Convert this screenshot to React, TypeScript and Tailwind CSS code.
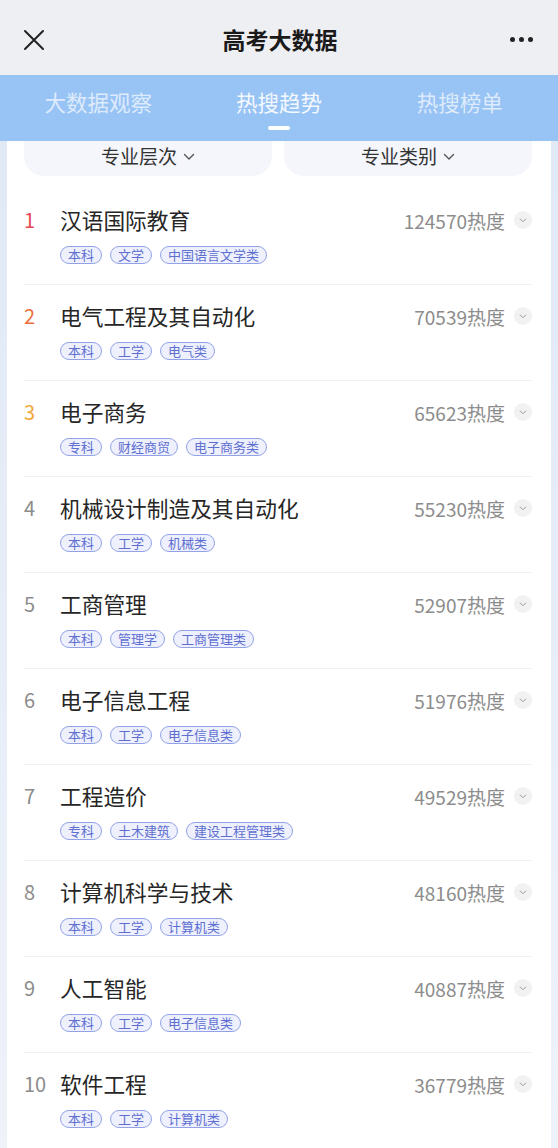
import React from 'react'

type Item = {
  name:  string
  heat:  number
  tags:  string[]
}

const ITEMS: Item[] = [
  { name: '汉语国际教育',         heat: 124570, tags: ['本科', '文学', '中国语言文学类'] },
  { name: '电气工程及其自动化',   heat: 70539,  tags: ['本科', '工学', '电气类'] },
  { name: '电子商务',             heat: 65623,  tags: ['专科', '财经商贸', '电子商务类'] },
  { name: '机械设计制造及其自动化', heat: 55230, tags: ['本科', '工学', '机械类'] },
  { name: '工商管理',             heat: 52907,  tags: ['本科', '管理学', '工商管理类'] },
  { name: '电子信息工程',         heat: 51976,  tags: ['本科', '工学', '电子信息类'] },
  { name: '工程造价',             heat: 49529,  tags: ['专科', '土木建筑', '建设工程管理类'] },
  { name: '计算机科学与技术',     heat: 48160,  tags: ['本科', '工学', '计算机类'] },
  { name: '人工智能',             heat: 40887,  tags: ['本科', '工学', '电子信息类'] },
  { name: '软件工程',             heat: 36779,  tags: ['本科', '工学', '计算机类'] },
]

const TABS = ['大数据观察', '热搜趋势', '热搜榜单']

const rankColor = (i: number) =>
  i === 0 ? 'text-[#e84a55]' : i === 1 ? 'text-[#ea6f3c]' : i === 2 ? 'text-[#f1a83d]' : 'text-[#8c8c8c]'

function Chevron({ className }: { className?: string }) {
  return (
    <svg viewBox="0 0 12 8" className={className} fill="none" stroke="currentColor" strokeWidth="1.4" strokeLinecap="round" strokeLinejoin="round">
      <path d="M1.5 1.5 6 6l4.5-4.5" />
    </svg>
  )
}

export default function App() {
  return (
    <div
      className="w-[558px] h-[1148px] overflow-hidden bg-gradient-to-b from-[#dfe8f7] to-[#eef2f9] flex flex-col"
      style={{ fontFamily: '"Noto Sans CJK SC", "Noto Sans", sans-serif' }}
    >
      {/* Header */}
      <header className="h-[75px] shrink-0 bg-[#eeeff3] flex items-center justify-between px-[22px] pt-[4px]">
        <svg viewBox="0 0 24 24" className="w-[24px] h-[24px] text-[#222]" fill="none" stroke="currentColor" strokeWidth="2" strokeLinecap="round">
          <path d="M3 3l18 18M21 3 3 21" />
        </svg>
        <h1 className="text-[23px] font-bold text-[#1a1a1a] leading-none -mr-[4px]">高考大数据</h1>
        <div className="flex items-center gap-[4px] w-[26px]">
          <span className="w-[5px] h-[5px] rounded-full bg-[#222]" />
          <span className="w-[5px] h-[5px] rounded-full bg-[#222]" />
          <span className="w-[5px] h-[5px] rounded-full bg-[#222]" />
        </div>
      </header>

      {/* Tabs */}
      <nav className="h-[66px] shrink-0 bg-[#98c3f5] flex px-2">
        {TABS.map((t, i) => (
          <div key={t} className="flex-1 flex flex-col items-center pt-[13px]">
            <span className={`text-[21.5px] leading-[28px] ${i === 1 ? 'text-[#f4f8ff]' : 'text-[#deebfc]'}`}>{t}</span>
            {i === 1 && <span className="mt-[10px] w-[22px] h-[4px] rounded-full bg-white" />}
          </div>
        ))}
      </nav>

      {/* Card */}
      <main className="mx-[7px] flex-1 bg-white px-[17px]">
        <div className="grid grid-cols-2 gap-[12px] pr-[2px]">
          {['专业层次', '专业类别'].map(f => (
            <div key={f} className="h-[35px] rounded-b-[20px] bg-[#f4f6fc] flex items-center justify-center pb-[6px] text-[#333]">
              <span className="text-[19px] leading-none">{f}</span>
              <Chevron className="w-[12px] h-[8px] ml-[6px] mt-[2px] text-[#555]" />
            </div>
          ))}
        </div>

        <ul className="mt-[13px] pr-[2px]">
          {ITEMS.map((it, i) => (
            <li key={it.name} className="pt-[17px] pb-[20px] border-b border-[#f0f0f0]">
              <div className="flex items-center h-[28px]">
                <span className={`w-[36px] text-[20px] leading-none ${rankColor(i)}`}>{i + 1}</span>
                <span className="flex-1 text-[21.7px] leading-none text-[#262626]">{it.name}</span>
                <span className="text-[19px] leading-none text-[#8c8c8c]">{it.heat}热度</span>
                <span className="ml-[9px] w-[18px] h-[18px] rounded-full bg-[#f2f2f2] flex items-center justify-center">
                  <Chevron className="w-[8px] h-[5px] text-[#8f8f8f]" />
                </span>
              </div>
              <div className="mt-[12px] pl-[36px] flex gap-[8px]">
                {it.tags.map(tag => (
                  <span
                    key={tag}
                    className="h-[18px] px-[7px] rounded-full border border-[#93a2e6] bg-[#eef1fd] text-[#5e6fd0] text-[13px] leading-[16px]"
                  >
                    {tag}
                  </span>
                ))}
              </div>
            </li>
          ))}
        </ul>
      </main>
    </div>
  )
}
